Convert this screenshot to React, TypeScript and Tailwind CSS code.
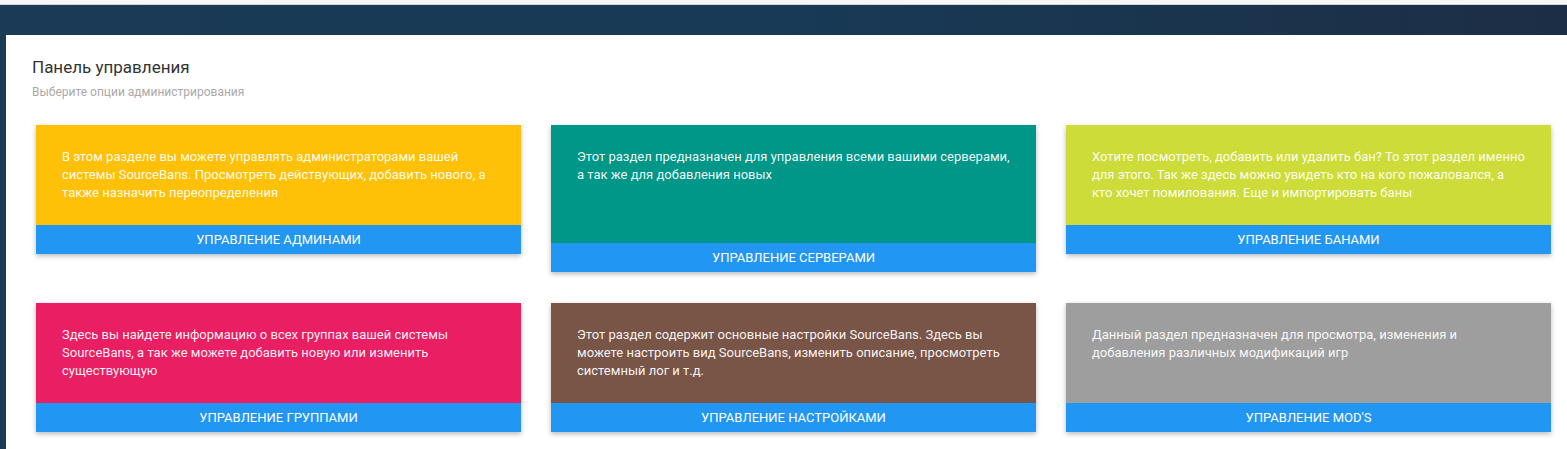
import React from "react";

// ─── Data ────────────────────────────────────────────────────────────────────

interface Section {
  text: string;
  action: string;
  color: string; // full Tailwind bg class
  height: string; // full Tailwind height class for the coloured body
}

const sections: Section[] = [
  {
    text: "В этом разделе вы можете управлять администраторами вашей системы SourceBans. Просмотреть действующих, добавить нового, а также назначить переопределения",
    action: "Управление админами",
    color: "bg-[#ffc107]",
    height: "h-[100px]",
  },
  {
    text: "Этот раздел предназначен для управления всеми вашими серверами, а так же для добавления новых",
    action: "Управление серверами",
    color: "bg-[#009688]",
    height: "h-[118px]",
  },
  {
    text: "Хотите посмотреть, добавить или удалить бан? То этот раздел именно для этого. Так же здесь можно увидеть кто на кого пожаловался, а кто хочет помилования. Еще и импортировать баны",
    action: "Управление банами",
    color: "bg-[#cddc39]",
    height: "h-[100px]",
  },
  {
    text: "Здесь вы найдете информацию о всех группах вашей системы SourceBans, а так же можете добавить новую или изменить существующую",
    action: "Управление группами",
    color: "bg-[#e91e63]",
    height: "h-[100px]",
  },
  {
    text: "Этот раздел содержит основные настройки SourceBans. Здесь вы можете настроить вид SourceBans, изменить описание, просмотреть системный лог и т.д.",
    action: "Управление настройками",
    color: "bg-[#795548]",
    height: "h-[100px]",
  },
  {
    text: "Данный раздел предназначен для просмотра, изменения и добавления различных модификаций игр",
    action: "Управление mod's",
    color: "bg-[#9e9e9e]",
    height: "h-[100px]",
  },
];

// ─── Sub-components ──────────────────────────────────────────────────────────

function SectionCard({ section }: { section: Section }) {
  return (
    <div className="flex flex-col shadow-[0_2px_5px_rgba(0,0,0,0.28)]">
      <div className={`${section.color} ${section.height} px-[26px] pt-[23px]`}>
        <p className="text-[13px] leading-[18px] text-white/95">{section.text}</p>
      </div>
      <button className="h-[29px] w-full bg-[#2196f3] text-[13px] uppercase text-white">
        {section.action}
      </button>
    </div>
  );
}

// ─── Main Export ─────────────────────────────────────────────────────────────

export default function App() {
  return (
    <div
      className="min-h-[449px] overflow-hidden bg-gradient-to-r from-[#1a3a55] via-[#183a56] to-[#1c2e45]"
      style={{ fontFamily: "Roboto, 'Noto Sans', sans-serif" }}
    >
      {/* Thin top bar */}
      <div className="h-[5px] border-b border-[#d6d6d6] bg-[#f7f7f7]" />

      {/* Header band */}
      <div className="h-[30px]" />

      {/* Content panel */}
      <div className="ml-[6px] min-h-[414px] w-[1600px] bg-white pl-[30px] pt-[22px]">
        <h1 className="-ml-[4px] text-[17px] leading-[20px] text-[#333]">Панель управления</h1>
        <p className="-ml-[4px] mt-[8px] text-[12px] leading-[14px] text-[#aaa]">
          Выберите опции администрирования
        </p>

        <div className="mt-[26px] grid grid-cols-[485px_485px_485px] items-start gap-x-[30px] gap-y-[31px]">
          {sections.map((s) => (
            <SectionCard key={s.action} section={s} />
          ))}
        </div>
      </div>
    </div>
  );
}
